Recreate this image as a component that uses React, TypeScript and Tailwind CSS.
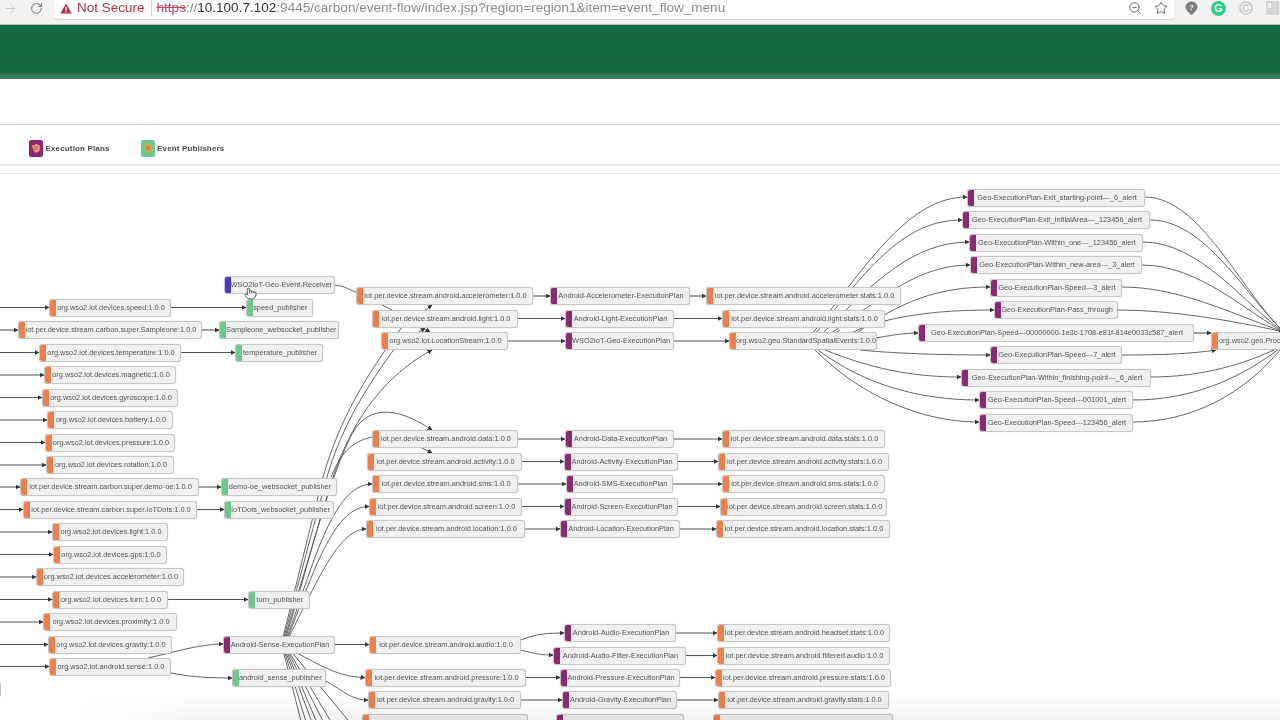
import React from "react";
import { ArrowRight, RotateCw, ZoomOut, Star, Pointer } from "lucide-react";

const ORANGE = "bg-[#ef7f4a]";
const PURPLE = "bg-[#8d2a6f]";
const GREEN = "bg-[#6cc88c]";
const BLUE = "bg-[#4a35c8]";

// page coords: left, right, centre y
type FlowNode = [number, number, number, string, string];

const nodes: FlowNode[] = [
  [49, 171, 307.5, ORANGE, "org.wso2.iot.devices.speed:1.0.0"],
  [18, 202, 330, ORANGE, "iot.per.device.stream.carbon.super.Sampleone:1.0.0"],
  [39, 181, 352.5, ORANGE, "org.wso2.iot.devices.temperature:1.0.0"],
  [44, 176, 375, ORANGE, "org.wso2.iot.devices.magnetic:1.0.0"],
  [42, 178, 397.5, ORANGE, "org.wso2.iot.devices.gyroscope:1.0.0"],
  [47, 173, 420, ORANGE, "org.wso2.iot.devices.battery:1.0.0"],
  [45, 175, 442.5, ORANGE, "org.wso2.iot.devices.pressure:1.0.0"],
  [46, 174, 465, ORANGE, "org.wso2.iot.devices.rotation:1.0.0"],
  [20, 199, 487, ORANGE, "iot.per.device.stream.carbon.super.demo-oe:1.0.0"],
  [23, 197, 509.5, ORANGE, "iot.per.device.stream.carbon.super.IoTDots:1.0.0"],
  [52, 168, 532, ORANGE, "org.wso2.iot.devices.light:1.0.0"],
  [53, 167, 554.5, ORANGE, "org.wso2.iot.devices.gps:1.0.0"],
  [36, 184, 577, ORANGE, "org.wso2.iot.devices.accelerometer:1.0.0"],
  [52, 168, 599.5, ORANGE, "org.wso2.iot.devices.turn:1.0.0"],
  [43, 177, 622, ORANGE, "org.wso2.iot.devices.proximity:1.0.0"],
  [48, 172, 644.5, ORANGE, "org.wso2.iot.devices.gravity:1.0.0"],
  [49, 171, 666.5, ORANGE, "org.wso2.iot.android.sense:1.0.0"],

  [223.5, 335, 285, BLUE, "WSO2IoT-Geo-Event-Receiver"],
  [246, 312.5, 307.5, GREEN, "speed_publisher"],
  [219, 339, 330, GREEN, "Sampleone_websocket_publisher"],
  [235, 323, 352.5, GREEN, "temperature_publisher"],
  [221, 337, 487, GREEN, "demo-oe_websocket_publisher"],
  [224, 334, 509.5, GREEN, "IoTDots_websocket_publisher"],
  [248, 309.5, 599.5, GREEN, "turn_publisher"],
  [223, 335, 644.5, PURPLE, "Android-Sense-ExecutionPlan"],
  [232, 326, 678, GREEN, "android_sense_publisher"],

  [356, 533, 296, ORANGE, "iot.per.device.stream.android.accelerometer:1.0.0"],
  [372, 518, 318.5, ORANGE, "iot.per.device.stream.android.light:1.0.0"],
  [381, 508, 341, ORANGE, "org.wso2.iot.LocationStream:1.0.0"],
  [372, 518, 439, ORANGE, "iot.per.device.stream.android.data:1.0.0"],
  [367, 522, 461.5, ORANGE, "iot.per.device.stream.android.activity:1.0.0"],
  [372, 518, 484, ORANGE, "iot.per.device.stream.android.sms:1.0.0"],
  [369, 522, 506.5, ORANGE, "iot.per.device.stream.android.screen:1.0.0"],
  [366, 525, 529, ORANGE, "iot.per.device.stream.android.location:1.0.0"],
  [369, 521, 644.5, ORANGE, "iot.per.device.stream.android.audio:1.0.0"],
  [365, 526, 677.5, ORANGE, "iot.per.device.stream.android.pressure:1.0.0"],
  [368, 521, 700, ORANGE, "iot.per.device.stream.android.gravity:1.0.0"],
  [362, 528, 723, ORANGE, ""],

  [550, 690, 296, PURPLE, "Android-Accelerometer-ExecutionPlan"],
  [565, 674, 318.5, PURPLE, "Android-Light-ExecutionPlan"],
  [565, 674, 341, PURPLE, "WSO2IoT-Geo-ExecutionPlan"],
  [565, 674, 439, PURPLE, "Android-Data-ExecutionPlan"],
  [564, 678, 461.5, PURPLE, "Android-Activity-ExecutionPlan"],
  [566, 673, 484, PURPLE, "Android-SMS-ExecutionPlan"],
  [564, 678, 506.5, PURPLE, "Android-Screen-ExecutionPlan"],
  [560, 680, 529, PURPLE, "Android-Location-ExecutionPlan"],
  [564, 676, 633, PURPLE, "Android-Audio-ExecutionPlan"],
  [553, 686, 655.5, PURPLE, "Android-Audio-Filter-ExecutionPlan"],
  [560, 680, 677.5, PURPLE, "Android-Pressure-ExecutionPlan"],
  [562, 677, 700, PURPLE, "Android-Gravity-ExecutionPlan"],
  [556, 684, 723, PURPLE, ""],

  [706, 901, 296, ORANGE, "iot.per.device.stream.android.accelerometer.stats:1.0.0"],
  [722, 885, 318.5, ORANGE, "iot.per.device.stream.android.light.stats:1.0.0"],
  [729, 877, 341, ORANGE, "org.wso2.geo.StandardSpatialEvents:1.0.0"],
  [722, 885, 439, ORANGE, "iot.per.device.stream.android.data.stats:1.0.0"],
  [718, 889, 461.5, ORANGE, "iot.per.device.stream.android.activity.stats:1.0.0"],
  [722, 885, 484, ORANGE, "iot.per.device.stream.android.sms.stats:1.0.0"],
  [720, 887, 506.5, ORANGE, "iot.per.device.stream.android.screen.stats:1.0.0"],
  [716, 890, 529, ORANGE, "iot.per.device.stream.android.location.stats:1.0.0"],
  [717, 890, 633, ORANGE, "iot.per.device.stream.android.headset.stats:1.0.0"],
  [717, 890, 655.5, ORANGE, "iot.per.device.stream.android.filtered.audio:1.0.0"],
  [715, 891, 677.5, ORANGE, "iot.per.device.stream.android.pressure.stats:1.0.0"],
  [718, 889, 700, ORANGE, "iot.per.device.stream.android.gravity.stats:1.0.0"],
  [713, 893, 723, ORANGE, ""],

  [967, 1145, 197.5, PURPLE, "Geo-ExecutionPlan-Exit_starting-point---_6_alert"],
  [962, 1150, 220, PURPLE, "Geo-ExecutionPlan-Exit_InitialArea---_123456_alert"],
  [969, 1143, 242.5, PURPLE, "Geo-ExecutionPlan-Within_one---_123456_alert"],
  [970, 1142, 265, PURPLE, "Geo-ExecutionPlan-Within_new-area---_3_alert"],
  [990, 1122, 287.5, PURPLE, "Geo-ExecutionPlan-Speed---3_alert"],
  [994, 1118, 310, PURPLE, "Geo-ExecutionPlan-Pass_through"],
  [918, 1194, 332.5, PURPLE, "Geo-ExecutionPlan-Speed---00000000-1e3c-1708-e81f-814e0033c587_alert"],
  [990, 1122, 355, PURPLE, "Geo-ExecutionPlan-Speed---7_alert"],
  [961, 1151, 377.5, PURPLE, "Geo-ExecutionPlan-Within_finishing-point---_6_alert"],
  [979, 1133, 400, PURPLE, "Geo-ExecutionPlan-Speed---001001_alert"],
  [979, 1133, 422.5, PURPLE, "Geo-ExecutionPlan-Speed---123456_alert"],
  [1211, 1370, 341, ORANGE, "org.wso2.geo.ProcessedSpatialEvents:1.0.0"],
];

// straight runs with an arrowhead at the end: x1, x2, y
const straight: [number, number, number][] = [
  [0, 49, 307.5], [0, 18, 330], [0, 39, 352.5], [0, 44, 375], [0, 42, 397.5], [0, 47, 420],
  [0, 45, 442.5], [0, 46, 465], [0, 20, 487], [0, 23, 509.5], [0, 52, 532], [0, 53, 554.5],
  [0, 36, 577], [0, 52, 599.5], [0, 43, 622], [0, 48, 644.5], [0, 49, 666.5],
  [171, 246, 307.5], [202, 219, 330], [181, 235, 352.5], [199, 221, 487], [197, 224, 509.5],
  [168, 248, 599.5], [335, 369, 644.5],
  [533, 550, 296], [518, 565, 318.5], [508, 565, 341], [518, 565, 439], [522, 564, 461.5],
  [518, 566, 484], [522, 564, 506.5], [525, 560, 529], [526, 560, 677.5], [521, 562, 700],
  [690, 706, 296], [674, 722, 318.5], [674, 729, 341], [674, 722, 439], [678, 718, 461.5],
  [673, 722, 484], [678, 720, 506.5], [680, 716, 529], [676, 717, 633], [686, 717, 655.5],
  [680, 715, 677.5], [677, 718, 700], [1194, 1211, 333],
];

const arrows = [
  // receiver and sense streams
  "M148,658 C175,652 200,644 223,644",
  "M171,673 C190,677 210,678 232,678",
  "M521,640 C535,634 548,633 564,633",
  "M521,650 C535,654 542,655 553,655",
  "M297,653 C325,668 340,677 365,677.5",
  "M326,681 C345,692 352,700 368,700",
  // bundle from the sense plan up to the location stream row
  "M283,637 C300,570 312,520 323,477 C338,425 362,380 402,327 L432,305",
  "M284,637 C302,570 315,520 327,477 C342,425 368,385 395,348 L425,328",
  "M285,637 C305,570 320,520 333,477 C352,420 385,375 432,350",
  "M286,637 C310,560 325,490 350,438 C365,405 395,405 432,430",
  "M287,637 C312,570 332,484 372,484",
  "M288,637 C316,565 335,506.5 369,506.5",
  "M289,637 C320,575 340,529 366,529",
  "M382,305 L392,310 L430,332",
  "M420,447 L432,453",
  // fan out of the spatial events stream
  "M812,334 C870,260 910,197 967,197",
  "M815,334 C870,265 905,220 962,220",
  "M822,334 C875,280 915,242 969,242",
  "M830,334 C885,295 920,265 970,265",
  "M850,338 C900,300 940,287 990,287",
  "M880,322 C920,312 955,310 994,310",
  "M875,338 C890,336 900,333 918,333",
  "M860,350 C900,354 950,355 990,355",
  "M825,350 C870,368 910,377 961,377",
  "M818,350 C865,385 920,400 979,400",
  "M815,350 C860,395 920,422 979,422",
  // fan into the processed stream
  "M1122,355 C1160,355 1190,354 1216,350",
  "M1145,197 C1200,197 1240,290 1284,332",
  "M1150,220 C1205,220 1245,295 1284,332",
  "M1143,242 C1200,242 1245,305 1284,332",
  "M1142,265 C1200,265 1250,315 1284,332",
  "M1122,287 C1180,287 1235,315 1284,332",
  "M1118,310 C1170,310 1230,320 1284,332",
  "M1151,377 C1200,377 1245,365 1284,345",
  "M1133,400 C1190,400 1240,380 1284,345",
  "M1133,422 C1190,422 1245,395 1284,345",
];

const plain = [
  "M335,285 C345,286 350,290 358,293",
  "M372,437 C350,442 340,455 331,477",
  // fan down off the bottom of the page
  "M283,650 L302,725", "M284,650 L307,725", "M285,650 L313,725", "M286,650 L318,725",
  "M287,650 L325,725", "M288,650 L333,725", "M290,650 L352,725",
  // short stubs behind the stats row
  "M812,344 L826,332", "M815,344 L832,332", "M818,344 L840,330", "M828,344 L862,328",
];

function Node({ n }: { n: FlowNode }) {
  const [left, right, cy, color, label] = n;
  return (
    <div
      className="absolute flex h-[18px] items-stretch overflow-hidden rounded-[3px] border border-[#c6c6c6] bg-[#f0f0f0] shadow-[0_0_1px_rgba(0,0,0,0.25)]"
      style={{ left, width: right - left, top: cy - 9 - 174 }}
    >
      <div className={`-ml-px w-[7px] shrink-0 ${color}`} />
      <div className="flex flex-1 items-center justify-center whitespace-nowrap pr-[4px] font-['Liberation_Sans',sans-serif] text-[7.4px] text-[#555]">
        {label}
      </div>
    </div>
  );
}

function Legend({ color, label, blob }: { color: string; label: string; blob: string }) {
  return (
    <div className="flex items-center gap-[2.5px]">
      <div className={`flex h-[17px] w-[14px] items-center justify-center rounded-[2px] ${color}`}>
        <svg width="10" height="11" viewBox="0 0 10 11">
          <path d="M1 2.5 L6 1 L9 3 L8.5 8 L5 10 L2.5 7.5 Z" fill={blob} />
          <path d="M3 4 L7 4 M3 6 L6.5 6" stroke="#a9604a" strokeWidth="0.8" />
        </svg>
      </div>
      <span className="font-['Liberation_Sans',sans-serif] text-[8px] font-bold tracking-[0.15px] text-[#4a4a4a]">{label}</span>
    </div>
  );
}

export default function App() {
  return (
    <div className="flex h-[720px] w-[1280px] flex-col overflow-hidden bg-white font-['Liberation_Sans',sans-serif] blur-[0.3px]">
      {/* browser toolbar */}
      <div className="flex h-[25px] shrink-0 items-start border-b border-[#b9b9b9] bg-[#f2f2f2]">
        <div className="flex h-[16px] w-[54px] items-center pl-[3px] gap-[12px]">
          <ArrowRight size={15} strokeWidth={1.5} className="text-[#c9c9c9]" />
          <RotateCw size={13} strokeWidth={1.8} className="text-[#6f6f6f]" />
        </div>
        <div className="flex h-[19px] w-[1120px] items-start rounded-b-[3px] bg-white shadow-[0_1px_1px_rgba(0,0,0,0.12)]">
          <div className="flex h-[16px] items-center gap-[5px] pl-[6px] text-[13.5px] leading-[16px] text-[#a8324a]">
            <svg width="12" height="11" viewBox="0 0 12 11">
              <path d="M6 0.5 L11.7 10.5 H0.3 Z" fill="#a8324a" />
              <rect x="5.4" y="3.8" width="1.2" height="3.6" fill="#fff" />
              <rect x="5.4" y="8.1" width="1.2" height="1.2" fill="#fff" />
            </svg>
            <span>Not Secure</span>
          </div>
          <div className="ml-[6px] h-[16px] w-px bg-[#d6d6d6]" />
          <div className="ml-[5px] flex-1 whitespace-nowrap text-[13.55px] leading-[16px] text-[#8a8a8a]">
            <span className="text-[#b4485c] line-through">https</span>://
            <span className="text-[#333]">10.100.7.102</span>:9445/carbon/event-flow/index.jsp?region=region1&item=event_flow_menu
          </div>
          <div className="flex h-[16px] items-center gap-[12px] pr-[6px] text-[#5f5f5f]">
            <ZoomOut size={14} strokeWidth={1.6} />
            <Star size={14} strokeWidth={1.6} />
          </div>
        </div>
        <div className="flex h-[16px] flex-1 items-center gap-[13px] pl-[11px]">
          <svg width="13" height="14" viewBox="0 0 13 14">
            <path d="M6.5 0.5 C10 0.5 12.5 3 12.5 6 C12.5 9 9.5 11 6.5 14 C3.5 11 0.5 9 0.5 6 C0.5 3 3 0.5 6.5 0.5 Z" fill="#7d7d7d" />
            <text x="6.5" y="9" textAnchor="middle" fontSize="8" fontWeight="700" fill="#f2f2f2">?</text>
          </svg>
          <div className="flex h-[15px] w-[15px] items-center justify-center rounded-full bg-[#2fcb8a] text-[11px] font-bold leading-none text-white">G</div>
          <svg width="14" height="14" viewBox="0 0 14 14" fill="none" stroke="#c4c4c4" strokeWidth="1.4">
            <circle cx="7" cy="7" r="6" />
            <path d="M9.5 5 A3 3 0 1 0 10 8" />
          </svg>
          <div className="h-[14px] w-[13px] rounded-[1px] bg-[#d4d4d4] p-[2px]">
            <div className="h-[5px] w-[3px] bg-[#f4f4f4]" />
          </div>
        </div>
      </div>

      {/* green banner */}
      <div className="flex h-[54px] shrink-0 flex-col justify-end border-b border-[#50685c] bg-[#126a42]">
        <div className="h-[5px] bg-gradient-to-b from-[#1d7049] to-[#3f8a68]" />
      </div>

      <div className="h-[46px] shrink-0 border-b border-[#c9cede]" />

      {/* legend */}
      <div className="flex h-[41px] shrink-0 items-center gap-[31px] border-b-2 border-[#ececec] pl-[29px] pt-[8px]">
        <Legend color="bg-[#8d2a6f]" label="Execution Plans" blob="#ee9a78" />
        <Legend color="bg-[#6cc88c]" label="Event Publishers" blob="#d9a23f" />
      </div>

      <div className="h-[8px] shrink-0 border-b border-[#dfdfdf]" />

      {/* flow canvas */}
      <div className="relative flex-1 overflow-hidden">
        <svg className="absolute inset-0" width="1280" height="546" viewBox="0 174 1280 546" fill="none">
          <defs>
            <marker id="head" markerWidth="5" markerHeight="5" refX="4.5" refY="2.5" orient="auto" markerUnits="userSpaceOnUse">
              <path d="M0,0 L5,2.5 L0,5 Z" fill="#333" />
            </marker>
          </defs>
          {straight.map(([x1, x2, y], i) => (
            <line key={i} x1={x1} x2={x2} y1={y} y2={y} stroke="#555" strokeWidth="1.1" markerEnd="url(#head)" />
          ))}
          {arrows.map((d, i) => (
            <path key={i} d={d} stroke="#555" strokeWidth="0.9" markerEnd="url(#head)" />
          ))}
          {plain.map((d, i) => (
            <path key={i} d={d} stroke="#555" strokeWidth="0.9" />
          ))}
        </svg>
        {nodes.map((n, i) => (
          <Node key={i} n={n} />
        ))}
        <div className="absolute left-[-14px] top-[507px] h-[17px] w-[15px] rounded-[3px] border border-[#c6c6c6] bg-[#f0f0f0]" />
        <Pointer size={13} strokeWidth={1.5} fill="#fff" className="absolute left-[244px] top-[113px] text-[#333]" />
        <div className="pointer-events-none absolute bottom-0 left-[80px] right-0 h-[26px] bg-gradient-to-t from-black/5 to-transparent" />
        <div className="pointer-events-none absolute bottom-0 left-[80px] h-[26px] w-[120px] bg-gradient-to-r from-white to-transparent" />
      </div>
    </div>
  );
}
